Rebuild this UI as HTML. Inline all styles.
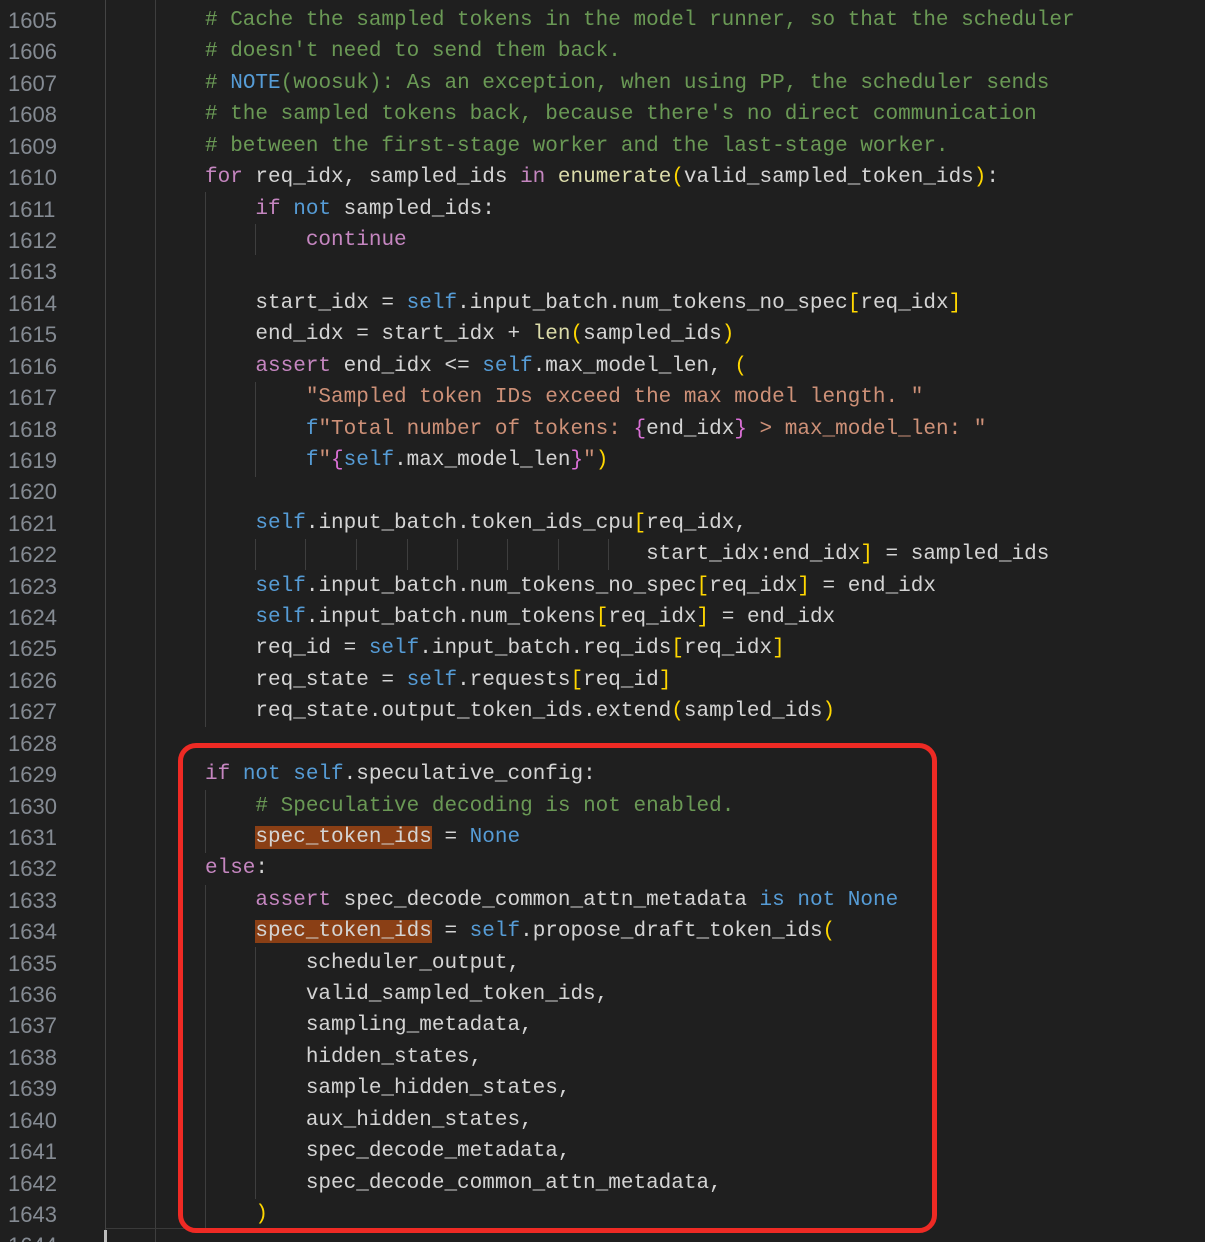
<!DOCTYPE html>
<html><head><meta charset="utf-8"><style>
html,body{margin:0;padding:0;background:#1f1f1f;width:1205px;height:1242px;overflow:hidden}
#w{position:relative;width:1205px;height:1242px;font-family:"Liberation Mono",monospace;font-size:21px;color:#d4d4d4}
#t{position:absolute;left:0;top:3px;width:1205px;height:1242px}
.ln{position:absolute;left:8px;color:#858b93;height:31.42px;line-height:31.42px;font-family:"Liberation Sans",sans-serif;font-size:22px}
.cl{position:absolute;left:205px;white-space:pre;height:31.42px;line-height:31.42px}
.g{position:absolute;width:1px;background:#3e3e3e}
.c{color:#6a9955}.k{color:#c586c0}.b{color:#569cd6}.f{color:#dcdcaa}.s{color:#ce9178}.y{color:#ffd700}.p{color:#da70d6}
.h{background:#8a3f15}
</style></head><body><div id="w">
<div class="g" style="left:105px;top:0;height:1242px;background:#444"></div>
<div class="g" style="left:155px;top:0;height:1242px"></div>
<div class="g" style="left:205px;top:192px;height:535px"></div>
<div class="g" style="left:255px;top:224px;height:31px"></div>
<div class="g" style="left:255px;top:382px;height:95px"></div>
<div class="g" style="left:205px;top:790px;height:63px"></div>
<div class="g" style="left:205px;top:885px;height:343px"></div>
<div class="g" style="left:255px;top:947px;height:252px"></div>
<div class="g" style="left:255px;top:539px;height:31px"></div><div class="g" style="left:305px;top:539px;height:31px"></div><div class="g" style="left:356px;top:539px;height:31px"></div><div class="g" style="left:407px;top:539px;height:31px"></div><div class="g" style="left:457px;top:539px;height:31px"></div><div class="g" style="left:507px;top:539px;height:31px"></div><div class="g" style="left:558px;top:539px;height:31px"></div><div class="g" style="left:608px;top:539px;height:31px"></div>
<div style="position:absolute;left:106px;top:1228px;width:80px;height:1px;background:#3a3a3a"></div>
<div style="position:absolute;left:104px;top:1230px;width:3px;height:12px;background:#bbb"></div>
<div style="position:absolute;left:178px;top:743px;width:749px;height:480px;border:5px solid #ee2a24;border-radius:18px"></div>
<div id="t">
<div class="ln" style="top:2px">1605</div><div class="cl" style="top:2px"><span class="c"># Cache the sampled tokens in the model runner, so that the scheduler</span></div>
<div class="ln" style="top:33.4px">1606</div><div class="cl" style="top:33.4px"><span class="c"># doesn't need to send them back.</span></div>
<div class="ln" style="top:64.8px">1607</div><div class="cl" style="top:64.8px"><span class="c"># </span><span class="b">NOTE</span><span class="c">(woosuk): As an exception, when using PP, the scheduler sends</span></div>
<div class="ln" style="top:96.3px">1608</div><div class="cl" style="top:96.3px"><span class="c"># the sampled tokens back, because there's no direct communication</span></div>
<div class="ln" style="top:127.7px">1609</div><div class="cl" style="top:127.7px"><span class="c"># between the first-stage worker and the last-stage worker.</span></div>
<div class="ln" style="top:159.1px">1610</div><div class="cl" style="top:159.1px"><span class="k">for</span> req_idx, sampled_ids <span class="k">in</span> <span class="f">enumerate</span><span class="y">(</span>valid_sampled_token_ids<span class="y">)</span>:</div>
<div class="ln" style="top:190.5px">1611</div><div class="cl" style="top:190.5px">    <span class="k">if</span> <span class="b">not</span> sampled_ids:</div>
<div class="ln" style="top:221.9px">1612</div><div class="cl" style="top:221.9px">        <span class="k">continue</span></div>
<div class="ln" style="top:253.4px">1613</div>
<div class="ln" style="top:284.8px">1614</div><div class="cl" style="top:284.8px">    start_idx = <span class="b">self</span>.input_batch.num_tokens_no_spec<span class="y">[</span>req_idx<span class="y">]</span></div>
<div class="ln" style="top:316.2px">1615</div><div class="cl" style="top:316.2px">    end_idx = start_idx + <span class="f">len</span><span class="y">(</span>sampled_ids<span class="y">)</span></div>
<div class="ln" style="top:347.6px">1616</div><div class="cl" style="top:347.6px">    <span class="k">assert</span> end_idx &lt;= <span class="b">self</span>.max_model_len, <span class="y">(</span></div>
<div class="ln" style="top:379px">1617</div><div class="cl" style="top:379px">        <span class="s">"Sampled token IDs exceed the max model length. "</span></div>
<div class="ln" style="top:410.5px">1618</div><div class="cl" style="top:410.5px">        <span class="b">f</span><span class="s">"Total number of tokens: </span><span class="p">{</span>end_idx<span class="p">}</span><span class="s"> &gt; max_model_len: "</span></div>
<div class="ln" style="top:441.9px">1619</div><div class="cl" style="top:441.9px">        <span class="b">f</span><span class="s">"</span><span class="p">{</span><span class="b">self</span>.max_model_len<span class="p">}</span><span class="s">"</span><span class="y">)</span></div>
<div class="ln" style="top:473.3px">1620</div>
<div class="ln" style="top:504.7px">1621</div><div class="cl" style="top:504.7px">    <span class="b">self</span>.input_batch.token_ids_cpu<span class="y">[</span>req_idx,</div>
<div class="ln" style="top:536.1px">1622</div><div class="cl" style="top:536.1px">                                   start_idx:end_idx<span class="y">]</span> = sampled_ids</div>
<div class="ln" style="top:567.6px">1623</div><div class="cl" style="top:567.6px">    <span class="b">self</span>.input_batch.num_tokens_no_spec<span class="y">[</span>req_idx<span class="y">]</span> = end_idx</div>
<div class="ln" style="top:599px">1624</div><div class="cl" style="top:599px">    <span class="b">self</span>.input_batch.num_tokens<span class="y">[</span>req_idx<span class="y">]</span> = end_idx</div>
<div class="ln" style="top:630.4px">1625</div><div class="cl" style="top:630.4px">    req_id = <span class="b">self</span>.input_batch.req_ids<span class="y">[</span>req_idx<span class="y">]</span></div>
<div class="ln" style="top:661.8px">1626</div><div class="cl" style="top:661.8px">    req_state = <span class="b">self</span>.requests<span class="y">[</span>req_id<span class="y">]</span></div>
<div class="ln" style="top:693.2px">1627</div><div class="cl" style="top:693.2px">    req_state.output_token_ids.extend<span class="y">(</span>sampled_ids<span class="y">)</span></div>
<div class="ln" style="top:724.7px">1628</div>
<div class="ln" style="top:756.1px">1629</div><div class="cl" style="top:756.1px"><span class="k">if</span> <span class="b">not</span> <span class="b">self</span>.speculative_config:</div>
<div class="ln" style="top:787.5px">1630</div><div class="cl" style="top:787.5px">    <span class="c"># Speculative decoding is not enabled.</span></div>
<div class="ln" style="top:818.9px">1631</div><div class="cl" style="top:818.9px">    <span class="h">spec_token_ids</span> = <span class="b">None</span></div>
<div class="ln" style="top:850.3px">1632</div><div class="cl" style="top:850.3px"><span class="k">else</span>:</div>
<div class="ln" style="top:881.8px">1633</div><div class="cl" style="top:881.8px">    <span class="k">assert</span> spec_decode_common_attn_metadata <span class="b">is</span> <span class="b">not</span> <span class="b">None</span></div>
<div class="ln" style="top:913.2px">1634</div><div class="cl" style="top:913.2px">    <span class="h">spec_token_ids</span> = <span class="b">self</span>.propose_draft_token_ids<span class="y">(</span></div>
<div class="ln" style="top:944.6px">1635</div><div class="cl" style="top:944.6px">        scheduler_output,</div>
<div class="ln" style="top:976px">1636</div><div class="cl" style="top:976px">        valid_sampled_token_ids,</div>
<div class="ln" style="top:1007.4px">1637</div><div class="cl" style="top:1007.4px">        sampling_metadata,</div>
<div class="ln" style="top:1038.9px">1638</div><div class="cl" style="top:1038.9px">        hidden_states,</div>
<div class="ln" style="top:1070.3px">1639</div><div class="cl" style="top:1070.3px">        sample_hidden_states,</div>
<div class="ln" style="top:1101.7px">1640</div><div class="cl" style="top:1101.7px">        aux_hidden_states,</div>
<div class="ln" style="top:1133.1px">1641</div><div class="cl" style="top:1133.1px">        spec_decode_metadata,</div>
<div class="ln" style="top:1164.5px">1642</div><div class="cl" style="top:1164.5px">        spec_decode_common_attn_metadata,</div>
<div class="ln" style="top:1196px">1643</div><div class="cl" style="top:1196px">    <span class="y">)</span></div>
<div class="ln" style="top:1227.4px">1644</div>
</div>
</div></body></html>
